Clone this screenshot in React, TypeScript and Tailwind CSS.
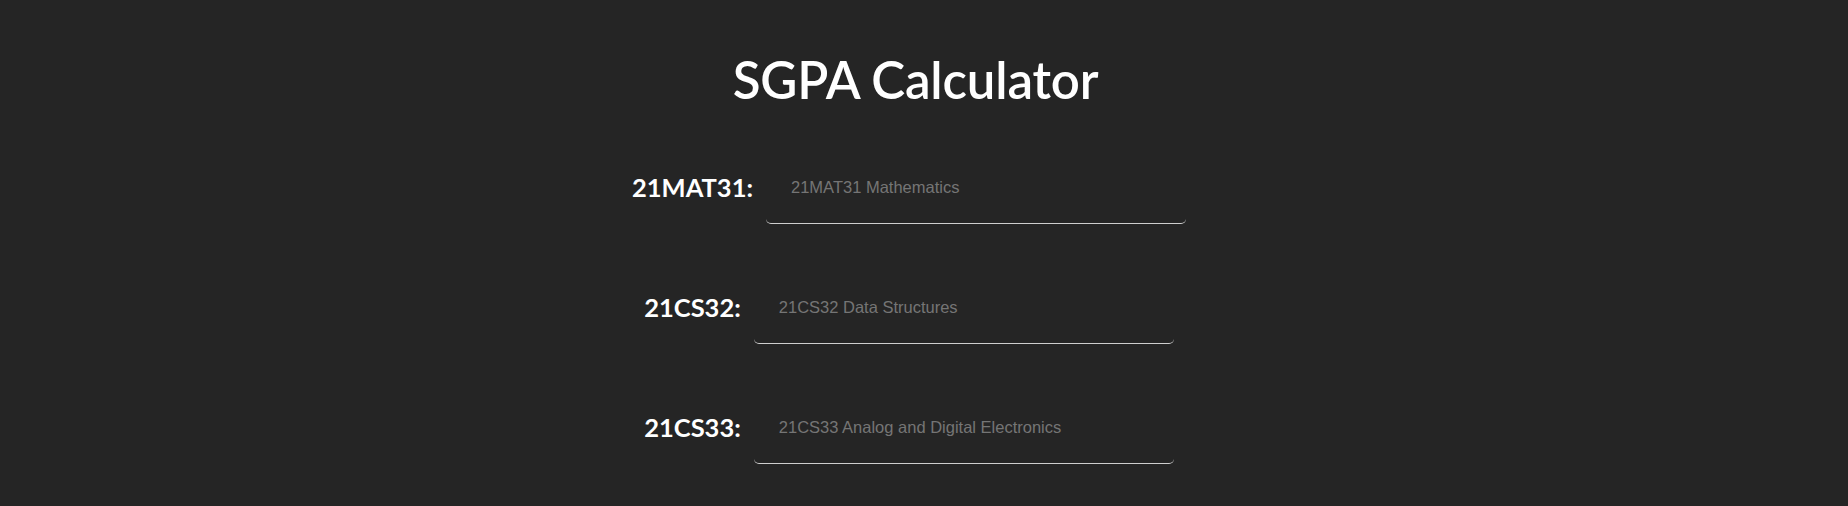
import React from 'react';

const subjects = [
  { code: '21MAT31', name: '21MAT31 Mathematics' },
  { code: '21CS32', name: '21CS32 Data Structures' },
  { code: '21CS33', name: '21CS33 Analog and Digital Electronics' },
];

const App: React.FC = () => {
  return (
    <div className="min-h-screen bg-[#252525] text-white pr-[17px] font-['Lato',sans-serif]">
      <div className="flex flex-col items-center pt-[45px]">
        <h1 className="text-[51px] leading-[70px] font-semibold tracking-[-0.2px]">SGPA Calculator</h1>
        <div className="mt-[36px] flex flex-col items-center gap-[47px]">
          {subjects.map((s) => (
            <div key={s.code} className="flex items-center">
              <label className="text-[25.5px] font-bold">{s.code}:</label>
              <input
                type="text"
                placeholder={s.name}
                className="mx-[13px] h-[73px] w-[420px] rounded-[5px] border-b border-[#cfcfcf] bg-transparent px-[25px] font-['Liberation_Sans',Arial,sans-serif] text-[16.5px] text-white outline-none placeholder:text-[#757575]"
              />
            </div>
          ))}
        </div>
      </div>
    </div>
  );
};

export default App;
